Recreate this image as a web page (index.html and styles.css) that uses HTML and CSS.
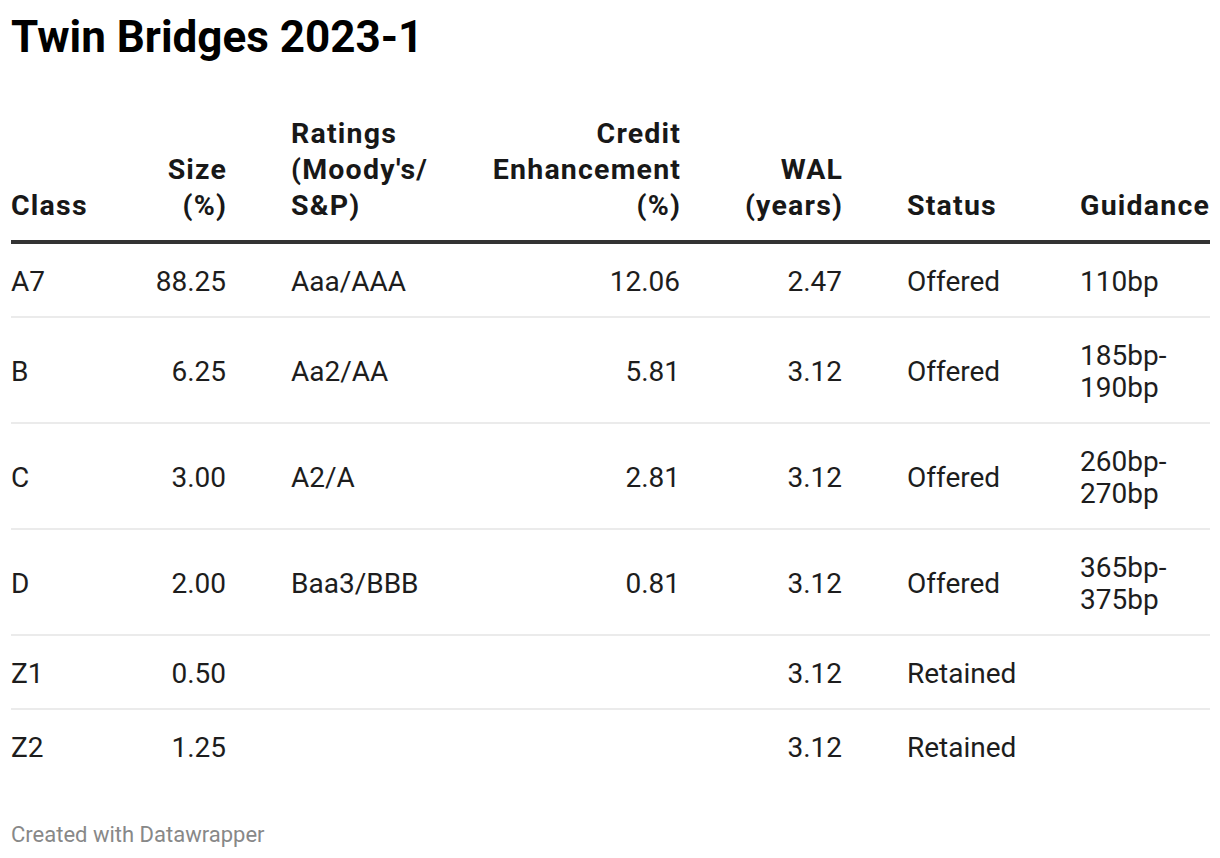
FILE: index.html
```html
<!DOCTYPE html>
<html lang="en">
<head>
<meta charset="utf-8">
<title>Twin Bridges 2023-1</title>
<link rel="stylesheet" href="styles.css">
</head>
<body>
<div class="chart">
  <h1 class="title">Twin Bridges 2023-1</h1>
  <table class="dw-table">
    <colgroup>
      <col class="c-class">
      <col class="c-size">
      <col class="c-ratings">
      <col class="c-credit">
      <col class="c-wal">
      <col class="c-status">
      <col class="c-guidance">
    </colgroup>
    <thead>
      <tr>
        <th class="left"><span class="h">Class</span></th>
        <th class="right"><span class="h">Size<br>(%)</span></th>
        <th class="left gap"><span class="h">Ratings<br>(Moody's/<br>S&amp;P)</span></th>
        <th class="right"><span class="h">Credit<br>Enhancement<br>(%)</span></th>
        <th class="right"><span class="h">WAL<br>(years)</span></th>
        <th class="left gap"><span class="h">Status</span></th>
        <th class="left"><span class="h">Guidance</span></th>
      </tr>
    </thead>
    <tbody>
      <tr>
        <td class="left">A7</td>
        <td class="right">88.25</td>
        <td class="left gap">Aaa/AAA</td>
        <td class="right">12.06</td>
        <td class="right">2.47</td>
        <td class="left gap">Offered</td>
        <td class="left">110bp</td>
      </tr>
      <tr>
        <td class="left">B</td>
        <td class="right">6.25</td>
        <td class="left gap">Aa2/AA</td>
        <td class="right">5.81</td>
        <td class="right">3.12</td>
        <td class="left gap">Offered</td>
        <td class="left">185bp-<br>190bp</td>
      </tr>
      <tr>
        <td class="left">C</td>
        <td class="right">3.00</td>
        <td class="left gap">A2/A</td>
        <td class="right">2.81</td>
        <td class="right">3.12</td>
        <td class="left gap">Offered</td>
        <td class="left">260bp-<br>270bp</td>
      </tr>
      <tr>
        <td class="left">D</td>
        <td class="right">2.00</td>
        <td class="left gap">Baa3/BBB</td>
        <td class="right">0.81</td>
        <td class="right">3.12</td>
        <td class="left gap">Offered</td>
        <td class="left">365bp-<br>375bp</td>
      </tr>
      <tr>
        <td class="left">Z1</td>
        <td class="right">0.50</td>
        <td class="left gap"></td>
        <td class="right"></td>
        <td class="right">3.12</td>
        <td class="left gap">Retained</td>
        <td class="left"></td>
      </tr>
      <tr>
        <td class="left">Z2</td>
        <td class="right">1.25</td>
        <td class="left gap"></td>
        <td class="right"></td>
        <td class="right">3.12</td>
        <td class="left gap">Retained</td>
        <td class="left"></td>
      </tr>
    </tbody>
  </table>
  <div class="footer">Created with Datawrapper</div>
</div>
</body>
</html>
```

FILE: styles.css
```css
html, body {
  margin: 0;
  padding: 0;
  background: #ffffff;
}

body {
  font-family: Roboto, "Liberation Sans", Arial, sans-serif;
  color: #181818;
}

.chart {
  padding: 11px 10px 0 11px;
  width: 1199px;
}

.title {
  margin: 0;
  font-size: 44px;
  line-height: 52px;
  font-weight: 700;
  color: #000000;
}

.dw-table {
  margin-top: 53px;
  width: 1199px;
  table-layout: fixed;
  border-collapse: collapse;
  border-spacing: 0;
}

.c-class { width: 119px; }
.c-size { width: 96px; }
.c-ratings { width: 264px; }
.c-credit { width: 190px; }
.c-wal { width: 162px; }
.c-status { width: 238px; }
.c-guidance { width: 130px; }

.dw-table th,
.dw-table td {
  padding-left: 0;
  padding-right: 0;
}

.dw-table th {
  font-size: 28.5px;
  font-weight: 700;
  letter-spacing: 1.2px;
  line-height: 36px;
  vertical-align: bottom;
  padding-top: 0;
  padding-bottom: 16px;
  border-bottom: 4px solid #333333;
  color: #181818;
  white-space: nowrap;
}

.dw-table th .h {
  display: inline-block;
}

.dw-table th.right .h {
  margin-right: -1.2px;
}

.dw-table td {
  font-size: 28px;
  font-weight: 400;
  line-height: 32px;
  vertical-align: middle;
  padding-top: 22px;
  padding-bottom: 18px;
  border-bottom: 2px solid #ebebeb;
  color: #1d1d1d;
  white-space: nowrap;
}

.dw-table tbody tr:last-child td {
  border-bottom: none;
}

.left { text-align: left; }
.right { text-align: right; }
.dw-table .gap { padding-left: 65px; }

.footer {
  margin-top: 40px;
  font-size: 22px;
  line-height: 26px;
  color: #888888;
}
```
